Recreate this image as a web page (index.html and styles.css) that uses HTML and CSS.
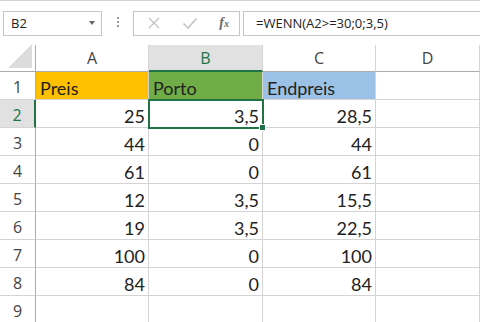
FILE: index.html
```html
<!DOCTYPE html>
<html>

<head>
    <title>Mappe1 - Excel</title>
    <link rel="stylesheet" href="styles.css">
</head>

<body>
    <div id="toolbar">
        <div class="name-box">
            <span>B2</span>
            <span class="drop"></span>
        </div>
        <div class="grip"></div>
        <div class="fx-buttons">
            <svg width="14" height="14" viewBox="0 0 14 14">
                <path d="M2 2 L12 12 M12 2 L2 12" stroke="#c4c4c4" stroke-width="1.4" fill="none" />
            </svg>
            <svg width="16" height="14" viewBox="0 0 16 14">
                <path d="M1.5 7.5 L6 12 L14.5 2.5" stroke="#c4c4c4" stroke-width="1.6" fill="none" />
            </svg>
            <span class="fx">f<sub>x</sub></span>
        </div>
        <div class="formula">=WENN(A2&gt;=30;0;3,5)</div>
    </div>

    <div id="sheet">
        <div class="corner"><span class="tri"></span></div>
        <div class="col-head">A</div>
        <div class="col-head active">B</div>
        <div class="col-head">C</div>
        <div class="col-head">D</div>

        <div class="row-head">1</div>
        <div class="cell text orange">Preis</div>
        <div class="cell text green">Porto</div>
        <div class="cell text blue">Endpreis</div>
        <div class="cell"></div>

        <div class="row-head active">2</div>
        <div class="cell">25</div>
        <div class="cell selected">3,5<span class="handle"></span></div>
        <div class="cell">28,5</div>
        <div class="cell"></div>

        <div class="row-head">3</div>
        <div class="cell">44</div>
        <div class="cell">0</div>
        <div class="cell">44</div>
        <div class="cell"></div>

        <div class="row-head">4</div>
        <div class="cell">61</div>
        <div class="cell">0</div>
        <div class="cell">61</div>
        <div class="cell"></div>

        <div class="row-head">5</div>
        <div class="cell">12</div>
        <div class="cell">3,5</div>
        <div class="cell">15,5</div>
        <div class="cell"></div>

        <div class="row-head">6</div>
        <div class="cell">19</div>
        <div class="cell">3,5</div>
        <div class="cell">22,5</div>
        <div class="cell"></div>

        <div class="row-head">7</div>
        <div class="cell">100</div>
        <div class="cell">0</div>
        <div class="cell">100</div>
        <div class="cell"></div>

        <div class="row-head">8</div>
        <div class="cell">84</div>
        <div class="cell">0</div>
        <div class="cell">84</div>
        <div class="cell"></div>

        <div class="row-head">9</div>
        <div class="cell"></div>
        <div class="cell"></div>
        <div class="cell"></div>
        <div class="cell"></div>
    </div>
</body>

</html>
```

FILE: styles.css
```css
body {
    margin: 0;
    background-color: #ffffff;
    font-family: "Open Sans", "Noto Sans", sans-serif;
    overflow: hidden;
}

#toolbar {
    display: flex;
    align-items: center;
    height: 45px;
    border-top: 1px solid #d4d4d4;
    padding-left: 3px;
    box-sizing: border-box;
}

.name-box {
    display: flex;
    align-items: center;
    justify-content: space-between;
    width: 99px;
    height: 25px;
    border: 1px solid #c6c6c6;
    box-sizing: border-box;
    padding: 0 6px 0 7px;
    font-size: 13px;
    color: #222;
}

.drop {
    width: 0;
    height: 0;
    border-left: 3px solid transparent;
    border-right: 3px solid transparent;
    border-top: 4px solid #666;
}

.grip {
    width: 2px;
    height: 12px;
    margin: 0 14px 0 15px;
    background-image: linear-gradient(#9a9a9a 50%, transparent 50%);
    background-size: 2px 4px;
}

.fx-buttons {
    display: flex;
    align-items: center;
    justify-content: space-between;
    width: 107px;
    height: 25px;
    border: 1px solid #c6c6c6;
    box-sizing: border-box;
    padding: 0 10px 0 13px;
}

.fx {
    font-family: "Liberation Serif", serif;
    font-style: italic;
    font-weight: bold;
    font-size: 14px;
    color: #6a6a6a;
}

.fx sub {
    font-size: 10px;
    vertical-align: 0;
}

.formula {
    flex: 1;
    height: 25px;
    margin-left: 3px;
    border: 1px solid #c6c6c6;
    border-right: none;
    box-sizing: border-box;
    padding-left: 12px;
    font-size: 13px;
    line-height: 23px;
    color: #222;
}

#sheet {
    display: grid;
    grid-template-columns: 36px 113px 114px 113px 1fr;
    grid-template-rows: 27px repeat(9, 28px);
}

.corner {
    position: relative;
    border-right: 1px solid #ababab;
    border-bottom: 1px solid #ababab;
}

.tri {
    position: absolute;
    right: 3px;
    bottom: 3px;
    width: 0;
    height: 0;
    border-left: 24px solid transparent;
    border-bottom: 24px solid #dcdcdc;
}

.col-head {
    display: flex;
    align-items: center;
    justify-content: center;
    border-right: 1px solid #d4d4d4;
    border-bottom: 1px solid #ababab;
    font-size: 16px;
    color: #444;
}

.col-head.active {
    background-color: #e1e1e1;
    border-bottom: 2px solid #217346;
    color: #217346;
}

.row-head {
    display: flex;
    align-items: center;
    justify-content: center;
    padding-top: 2px;
    box-sizing: border-box;
    border-right: 1px solid #ababab;
    border-bottom: 1px solid #d4d4d4;
    font-size: 16px;
    color: #444;
}

.row-head.active {
    background-color: #e1e1e1;
    border-right: 2px solid #217346;
    color: #217346;
}

.cell {
    position: relative;
    border-right: 1px solid #d4d4d4;
    border-bottom: 1px solid #d4d4d4;
    box-sizing: border-box;
    padding: 4px 3px 0 4px;
    font-family: "Lato", "Open Sans", sans-serif;
    font-size: 18px;
    line-height: 24px;
    color: #222;
    text-align: right;
}

.cell.text {
    text-align: left;
}

.orange {
    background-color: #ffc000;
}

.green {
    background-color: #70ad47;
}

.blue {
    background-color: #9bc2e6;
}

.selected {
    outline: 2px solid #217346;
    outline-offset: -1px;
    z-index: 1;
}

.handle {
    position: absolute;
    right: -4px;
    bottom: -4px;
    width: 5px;
    height: 5px;
    background-color: #217346;
    border: 1px solid #ffffff;
}
```
